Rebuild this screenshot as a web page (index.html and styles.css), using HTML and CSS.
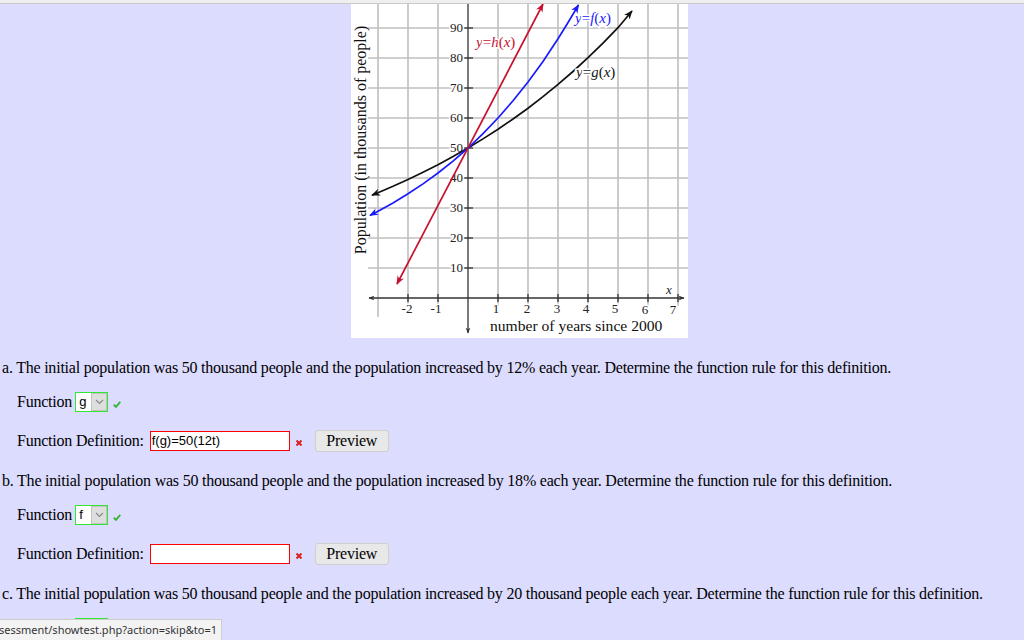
FILE: index.html
```html
<!DOCTYPE html>
<html>
<head>
<meta charset="utf-8">
<title>Population functions</title>
<link rel="stylesheet" href="styles.css">
</head>
<body>
<div class="topbar"></div>
<div class="page">
  <div class="graph">
    <svg width="337" height="334" viewBox="0 0 337 334" xmlns="http://www.w3.org/2000/svg">
      <defs>
        <marker id="mr" viewBox="0 0 10 10" refX="9" refY="5" markerWidth="9" markerHeight="9" markerUnits="userSpaceOnUse" orient="auto-start-reverse"><path d="M0,1 L10,5 L0,9 L3,5 z" fill="#c8102e"/></marker>
        <marker id="mb" viewBox="0 0 10 10" refX="9" refY="5" markerWidth="9" markerHeight="9" markerUnits="userSpaceOnUse" orient="auto-start-reverse"><path d="M0,1 L10,5 L0,9 L3,5 z" fill="#1a1aff"/></marker>
        <marker id="mk" viewBox="0 0 10 10" refX="9" refY="5" markerWidth="9" markerHeight="9" markerUnits="userSpaceOnUse" orient="auto-start-reverse"><path d="M0,1 L10,5 L0,9 L3,5 z" fill="#111"/></marker>
        <marker id="ma" viewBox="0 0 10 10" refX="9" refY="5" markerWidth="6" markerHeight="6" markerUnits="userSpaceOnUse" orient="auto-start-reverse"><path d="M0,1 L10,5 L0,9 L3,5 z" fill="#333"/></marker>
      </defs>
      <g class="grid">
        <line x1="27" y1="0" x2="27" y2="313"/>
        <line x1="57" y1="0" x2="57" y2="302"/>
        <line x1="87" y1="0" x2="87" y2="302"/>
        <line x1="147" y1="0" x2="147" y2="302"/>
        <line x1="177" y1="0" x2="177" y2="302"/>
        <line x1="207" y1="0" x2="207" y2="302"/>
        <line x1="237" y1="0" x2="237" y2="302"/>
        <line x1="267" y1="0" x2="267" y2="302"/>
        <line x1="297" y1="0" x2="297" y2="302"/>
        <line x1="327" y1="0" x2="327" y2="302"/>
        <line x1="17" y1="24" x2="337" y2="24"/>
        <line x1="17" y1="54" x2="337" y2="54"/>
        <line x1="17" y1="84" x2="337" y2="84"/>
        <line x1="17" y1="114" x2="337" y2="114"/>
        <line x1="17" y1="144" x2="337" y2="144"/>
        <line x1="17" y1="174" x2="337" y2="174"/>
        <line x1="17" y1="204" x2="337" y2="204"/>
        <line x1="17" y1="234" x2="337" y2="234"/>
        <line x1="17" y1="264" x2="337" y2="264"/>
      </g>
      <g class="axis">
        <line x1="18" y1="294" x2="333" y2="294" marker-start="url(#ma)" marker-end="url(#ma)"/>
        <line x1="117" y1="0" x2="117" y2="329" marker-end="url(#ma)"/>
        <line x1="112" y1="24" x2="122" y2="24"/>
        <line x1="112" y1="54" x2="122" y2="54"/>
        <line x1="112" y1="84" x2="122" y2="84"/>
        <line x1="112" y1="114" x2="122" y2="114"/>
        <line x1="112" y1="144" x2="122" y2="144"/>
        <line x1="112" y1="174" x2="122" y2="174"/>
        <line x1="112" y1="204" x2="122" y2="204"/>
        <line x1="112" y1="234" x2="122" y2="234"/>
        <line x1="112" y1="264" x2="122" y2="264"/>
        <line x1="57" y1="290" x2="57" y2="298"/>
        <line x1="87" y1="290" x2="87" y2="298"/>
        <line x1="147" y1="290" x2="147" y2="298"/>
        <line x1="177" y1="290" x2="177" y2="298"/>
        <line x1="207" y1="290" x2="207" y2="298"/>
        <line x1="237" y1="290" x2="237" y2="298"/>
        <line x1="267" y1="290" x2="267" y2="298"/>
        <line x1="297" y1="290" x2="297" y2="298"/>
        <line x1="327" y1="290" x2="327" y2="298"/>
      </g>
      <g class="ylab">
        <text x="112" y="28">90</text>
        <text x="112" y="58">80</text>
        <text x="112" y="88">70</text>
        <text x="112" y="118">60</text>
        <text x="112" y="148">50</text>
        <text x="112" y="178">40</text>
        <text x="112" y="208">30</text>
        <text x="112" y="238">20</text>
        <text x="112" y="268">10</text>
      </g>
      <g class="xlab">
        <text x="56" y="309">-2</text>
        <text x="85" y="309">-1</text>
        <text x="145" y="309">1</text>
        <text x="176" y="309">2</text>
        <text x="206" y="309">3</text>
        <text x="235" y="309">4</text>
        <text x="264" y="309">5</text>
        <text x="294" y="310">6</text>
        <text x="322" y="310">7</text>
      </g>
      <text class="xvar" x="315" y="290">x</text>
      <text class="xtitle" x="139" y="327">number of years since 2000</text>
      <text class="ytitle" transform="translate(15,136) rotate(-90)">Population (in thousands of people)</text>
      <polyline class="curve g" marker-start="url(#mk)" marker-end="url(#mk)" points="21,191.1 27,188.7 42,182.3 57,175.5 72,168.3 87,160.7 102,152.6 117,144 132,134.9 147,125.3 162,115 177,104.2 192,92.6 207,80.4 222,67.5 237,53.7 252,39.1 267,23.7 281,7"/>
      <polyline class="curve f" marker-start="url(#mb)" marker-end="url(#mb)" points="19,211.4 27,207.2 42,198.9 57,189.8 72,179.9 87,169 102,157.1 117,144 132,129.7 147,114 162,96.8 177,78 192,57.4 207,34.8 216,20.2 227.5,1"/>
      <line class="curve h" marker-start="url(#mr)" marker-end="url(#mr)" x1="46" y1="280" x2="192" y2="0"/>
      <text class="flab hl" x="125" y="43"><tspan class="it">y</tspan>=<tspan class="it">h</tspan>(<tspan class="it">x</tspan>)</text>
      <text class="flab fl" x="224" y="19"><tspan class="it">y</tspan>=<tspan class="it">f</tspan>(<tspan class="it">x</tspan>)</text>
      <text class="flab gl" x="225" y="73"><tspan class="it">y</tspan>=<tspan class="it">g</tspan>(<tspan class="it">x</tspan>)</text>
    </svg>
  </div>

  <p class="q">a. The initial population was 50 thousand people and the population increased by 12% each year. Determine the function rule for this definition.</p>
  <div class="row fn">
    <span>Function</span>
    <span class="sel"><span class="val">g</span><span class="drop"><svg width="9" height="6" viewBox="0 0 9 6"><path d="M1,1 L4.5,4.5 L8,1" fill="none" stroke="#8a8a8a" stroke-width="1.2"/></svg></span></span>
    <svg class="ok" width="8" height="7" viewBox="0 0 8 7"><path d="M0.8,3.8 L3,5.8 L7.3,0.9" fill="none" stroke="#3cb43c" stroke-width="2"/></svg>
  </div>
  <div class="row def">
    <span>Function Definition:</span>
    <span class="inp">f(g)=50(12t)</span>
    <svg class="bad" width="6" height="6" viewBox="0 0 6 6"><path d="M0.5,0.5 L5.5,5.5 M5.5,0.5 L0.5,5.5" stroke="#dd1f1f" stroke-width="2"/></svg>
    <span class="prev">Preview</span>
  </div>

  <p class="q">b. The initial population was 50 thousand people and the population increased by 18% each year. Determine the function rule for this definition.</p>
  <div class="row fn">
    <span>Function</span>
    <span class="sel"><span class="val">f</span><span class="drop"><svg width="9" height="6" viewBox="0 0 9 6"><path d="M1,1 L4.5,4.5 L8,1" fill="none" stroke="#8a8a8a" stroke-width="1.2"/></svg></span></span>
    <svg class="ok" width="8" height="7" viewBox="0 0 8 7"><path d="M0.8,3.8 L3,5.8 L7.3,0.9" fill="none" stroke="#3cb43c" stroke-width="2"/></svg>
  </div>
  <div class="row def">
    <span>Function Definition:</span>
    <span class="inp"></span>
    <svg class="bad" width="6" height="6" viewBox="0 0 6 6"><path d="M0.5,0.5 L5.5,5.5 M5.5,0.5 L0.5,5.5" stroke="#dd1f1f" stroke-width="2"/></svg>
    <span class="prev">Preview</span>
  </div>

  <p class="q">c. The initial population was 50 thousand people and the population increased by 20 thousand people each year. Determine the function rule for this definition.</p>
  <div class="row fn">
    <span class="spacer"></span>
    <span class="sel"><span class="val"></span><span class="drop"></span></span>
  </div>
</div>
<div class="status">sessment/showtest.php?action=skip&amp;to=1</div>
</body>
</html>
```

FILE: styles.css
```css
html, body {
  margin: 0;
  padding: 0;
  background: #dcdcff;
  overflow: hidden;
  height: 640px;
}
body {
  font-family: "Liberation Serif", "Times New Roman", serif;
  font-size: 16px;
  letter-spacing: -0.22px;
  color: #000;
}
.topbar {
  height: 3px;
  background: #efefef;
  border-bottom: 1px solid #c9c9c9;
}
.page {
  padding-left: 2px;
}
.graph {
  margin-left: 349px;
  width: 337px;
  height: 334px;
  background: #fff;
  letter-spacing: 0;
}
.graph svg {
  display: block;
}
.grid line {
  stroke: #bfbfbf;
  stroke-width: 1.6;
}
.axis line {
  stroke: #333;
  stroke-width: 1.3;
}
.ylab text {
  font-family: "Liberation Serif", serif;
  font-size: 13px;
  text-anchor: end;
  fill: #222;
  stroke: #fff;
  stroke-width: 3px;
  paint-order: stroke;
}
.xlab text {
  font-family: "Liberation Serif", serif;
  font-size: 13px;
  text-anchor: middle;
  fill: #222;
  stroke: #fff;
  stroke-width: 3px;
  paint-order: stroke;
}
.xvar {
  font-family: "Liberation Serif", serif;
  font-style: italic;
  font-size: 13px;
  fill: #222;
}
.xtitle {
  font-family: "Liberation Serif", serif;
  font-size: 15.6px;
  fill: #111;
}
.ytitle {
  font-family: "Liberation Serif", serif;
  font-size: 16px;
  text-anchor: middle;
  fill: #111;
}
.curve {
  fill: none;
  stroke-width: 1.7;
}
.curve.h { stroke: #c8102e; }
.curve.f { stroke: #1a1aff; }
.curve.g { stroke: #111; }
.flab {
  font-family: "Liberation Serif", serif;
  font-size: 15px;
  stroke: #fff;
  stroke-width: 3px;
  paint-order: stroke;
}
.flab .it { font-style: italic; }
.hl { fill: #c8102e; }
.fl { fill: #1a1aff; }
.gl { fill: #111; }

.q {
  margin: 20px 0 13px 0;
  line-height: 20px;
  white-space: nowrap;
}
.def + .q {
  margin-top: 19px;
}
.row {
  display: flex;
  align-items: center;
  height: 22px;
  padding-left: 15px;
}
.row.fn {
  margin-bottom: 17px;
}
.spacer {
  display: inline-block;
  width: 55px;
}
.sel {
  display: inline-flex;
  box-sizing: border-box;
  width: 33px;
  height: 20px;
  margin-left: 3px;
  border: 1px solid #33e633;
  background: #fff;
}
.val {
  flex: 1;
  font-family: "Liberation Sans", Arial, sans-serif;
  font-size: 13px;
  letter-spacing: 0;
  line-height: 18px;
  padding-left: 3px;
}
.drop {
  box-sizing: border-box;
  width: 16px;
  height: 18px;
  background: #dedede;
  border: 1px solid #c2c2c2;
  display: flex;
  align-items: center;
  justify-content: center;
}
.ok {
  margin-left: 5px;
  margin-top: 4px;
}
.inp {
  box-sizing: border-box;
  width: 140px;
  height: 20px;
  margin-left: 6px;
  border: 1px solid #f00;
  background: #fff;
  font-family: "Liberation Sans", Arial, sans-serif;
  font-size: 13px;
  letter-spacing: 0;
  line-height: 18px;
  padding-left: 1px;
}
.bad {
  margin-left: 6px;
  margin-top: 4px;
}
.prev {
  box-sizing: border-box;
  width: 74px;
  height: 22px;
  margin-left: 13px;
  background: #e8e8e8;
  border: 1px solid #cfcfcf;
  border-radius: 3px;
  text-align: center;
  line-height: 20px;
}
.status {
  position: fixed;
  left: 0;
  bottom: 0;
  box-sizing: border-box;
  width: 222px;
  height: 21px;
  background: #f3f3f3;
  border: 1px solid #cdcdcd;
  border-left: none;
  border-bottom: none;
  font-family: "Noto Sans", "DejaVu Sans", sans-serif;
  font-size: 11px;
  letter-spacing: 0;
  line-height: 19px;
  color: #333;
  white-space: nowrap;
  overflow: hidden;
  text-indent: -1px;
}
```
